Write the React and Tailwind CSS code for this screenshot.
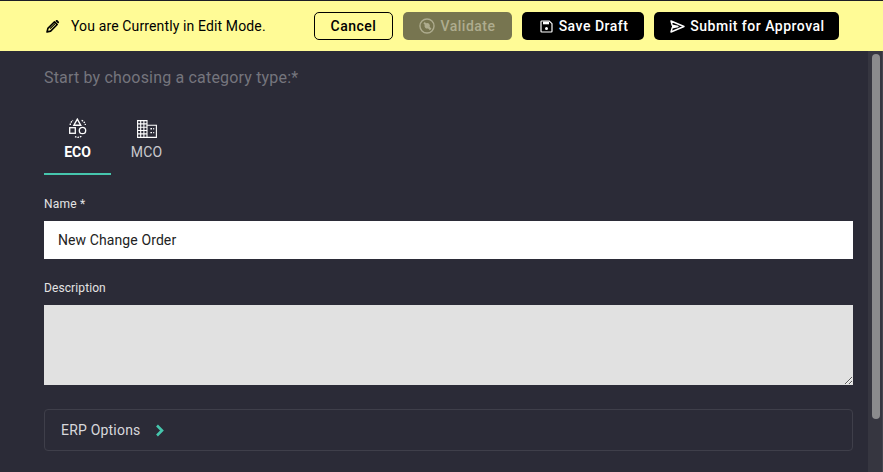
const font = { fontFamily: 'Roboto, "Liberation Sans", sans-serif' };

function Pencil() {
  return (
    <svg width="14" height="14" viewBox="0 0 14 14" className="mr-[11px] ml-[1px]">
      <path d="M1 13l.9-3.6 6.6-6.6 2.7 2.7-6.6 6.6z" fill="none" stroke="#000" strokeWidth="1.6" strokeLinejoin="round" />
      <path d="M3.6 9.2l5.3-5.3.9.9-5.3 5.3z" fill="#000" />
      <path d="M9.4 1.9l.8-.8c.3-.3.8-.3 1.1 0l1.6 1.6c.3.3.3.8 0 1.1l-.8.8z" fill="#000" />
      <path d="M1 13l.5-2 1.5 1.5z" fill="#000" />
    </svg>
  );
}
function Wrench() {
  return (
    <svg width="16" height="16" viewBox="0 0 15 15" className="mr-[5px]">
      <circle cx="7.5" cy="7.5" r="6.6" fill="none" stroke="currentColor" strokeWidth="1.3" />
      <path d="M4.1 5l1.3-1.3 1.2 1.2a2.6 2.6 0 0 1 3.4 3.4l1.7 1.7-1.5 1.5-1.7-1.7A2.6 2.6 0 0 1 5.3 6.4z" fill="currentColor" />
    </svg>
  );
}
function Save() {
  return (
    <svg width="13" height="13" viewBox="0 0 13 13" className="mr-[6px]">
      <path d="M1.7 1h7.6l2.7 2.7v7.6a.7.7 0 0 1-.7.7H1.7a.7.7 0 0 1-.7-.7V1.7a.7.7 0 0 1 .7-.7z" fill="none" stroke="#fff" strokeWidth="1.2" />
      <rect x="3" y="1.5" width="6" height="2.8" fill="#fff" />
      <circle cx="6.5" cy="8.6" r="1.5" fill="#fff" />
    </svg>
  );
}
function Send() {
  return (
    <svg width="15" height="13" viewBox="0 0 15 13" className="mr-[5px]">
      <path d="M1 1l13 5.5L1 12l1.2-4.2L8 6.5 2.2 5.2z" fill="none" stroke="#fff" strokeWidth="1.4" strokeLinejoin="round" />
      <path d="M2 6.5h6" stroke="#fff" strokeWidth="1.2" />
    </svg>
  );
}
function Shapes() {
  return (
    <svg width="18" height="20" viewBox="0 0 18 20" fill="none" stroke="#fff" strokeWidth="1.3">
      <path d="M8.3 1.2l3.4 6h-6.8z" strokeWidth="1.4" />
      <rect x="0.7" y="9.7" width="5.6" height="5.6" />
      <circle cx="13.5" cy="12.5" r="3.2" />
      <path d="M1.2 7A6 6 0 0 1 4 2.4M12.6 2.4A6 6 0 0 1 16.4 7M6 18.6a6 6 0 0 0 6.4-.4" strokeDasharray="1.6 0.9" />
    </svg>
  );
}
function Building() {
  return (
    <svg width="20" height="18" viewBox="0 0 20 18" fill="none" stroke="#fff" strokeWidth="1.1">
      <path d="M0.6 17.4V0.6h9.4v4.6h9.4v12.2z" />
      <path d="M3.7 0.6v16.8M6.9 0.6v16.8M10 5.2v12.2M0.6 3.9H10M0.6 7.2H10M0.6 10.5H10M0.6 13.9H10" />
      <path d="M13.4 8.8h1.6M16.2 8.8h1M13.4 12.6h1.6M16.2 12.6h1" strokeWidth="1.4" />
    </svg>
  );
}
function Chevron() {
  return (
    <svg width="10" height="13" viewBox="0 0 10 13" className="ml-[14px] mt-[1px]" fill="none" stroke="#46c6ad" strokeWidth="2.6">
      <path d="M2 1.5l5 5-5 5" />
    </svg>
  );
}

const btn = "h-[28px] rounded-[5px] flex items-center justify-center text-[14px] font-medium tracking-[0.5px]";

export default function App() {
  return (
    <div style={font} className="w-[883px] h-[472px] overflow-hidden flex flex-col bg-[#2b2b37] border-t border-[#1d1d26]">
      <header className="h-[50px] shrink-0 bg-[#fffb96] flex items-center pl-[45px] text-black">
        <Pencil />
        <span className="text-[14px] tracking-[0.13px] w-[243px]">You are Currently in Edit Mode.</span>
        <button className={btn + " w-[79px] border border-black"}>Cancel</button>
        <button className={btn + " w-[109px] ml-[10px] bg-[#777550] text-[#aeac8e]"}><Wrench />Validate</button>
        <button className={btn + " w-[122px] ml-[10px] pl-[2px] bg-black text-white"}><Save />Save Draft</button>
        <button className={btn + " w-[185px] ml-[10px] pl-[2px] bg-black text-white"}><Send />Submit for Approval</button>
      </header>
      <div className="flex-1 flex min-h-0">
        <main className="w-[868px] pl-[44px] pr-[15px]">
          <p className="pt-[17px] text-[16px] leading-[20px] text-[#75757d] tracking-[0.18px]">Start by choosing a category type:*</p>
          <div className="flex mt-[20px] h-[67px]">
            <div className="w-[67px] h-[67px] border-b-2 border-[#46c6ad] flex flex-col items-center pt-[10px]">
              <Shapes />
              <span className="text-[14px] leading-[16px] mt-[6px] font-bold text-white">ECO</span>
            </div>
            <div className="w-[71px] flex flex-col items-center pt-[12px]">
              <Building />
              <span className="text-[14px] leading-[16px] mt-[6px] text-[#c9c9ce] tracking-[0.2px]">MCO</span>
            </div>
          </div>
          <label className="block mt-[22px] text-[12px] leading-[14px] text-[#e4e4e4] tracking-[0.2px]">Name *</label>
          <div className="mt-[10px] h-[38px] bg-white flex items-center pl-[14px] text-[14px] text-[#222] tracking-[0.1px]">New Change Order</div>
          <label className="block mt-[22px] text-[12px] leading-[14px] text-[#e4e4e4] tracking-[0.1px]">Description</label>
          <textarea readOnly className="block mt-[10px] w-full h-[80px] bg-[#e1e1e1] outline-none" />
          <div className="mt-[24px] h-[42px] rounded-[4px] border border-[#3f3f4a] flex items-center pl-[16px] text-[14px] text-[#d8d8dc] tracking-[0.2px]">
            ERP Options
            <Chevron />
          </div>
        </main>
        <aside className="w-[15px] shrink-0 bg-[#363640] border-r border-[#45454f] pt-[3px] pl-[4px]">
          <div className="w-[8px] h-[365px] rounded-full bg-[#8b8b8d]" />
        </aside>
      </div>
    </div>
  );
}
